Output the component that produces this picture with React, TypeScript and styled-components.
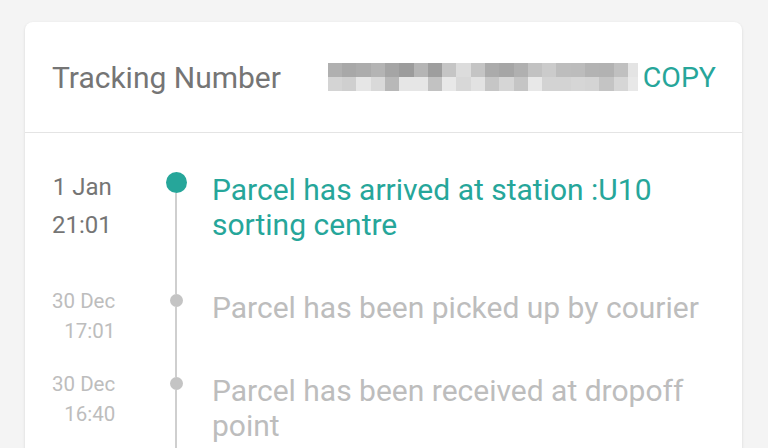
import React from 'react';
import styled, { createGlobalStyle } from 'styled-components';

const GlobalStyle = createGlobalStyle`
  html, body {
    margin: 0;
    padding: 0;
    background: #f4f4f4;
    font-family: Roboto, 'Liberation Sans', Arial, sans-serif;
  }
`;

const Page = styled.div`
  padding: 22px 26px 0 25px;
  height: 448px;
  box-sizing: border-box;
  overflow: hidden;
`;

const Card = styled.div`
  background: #fff;
  border-radius: 8px;
  box-shadow: 0 1px 3px rgba(0, 0, 0, 0.12);
  min-height: 600px;
`;

const Header = styled.div`
  display: flex;
  align-items: center;
  justify-content: space-between;
  height: 110px;
  padding: 0 26px 0 27px;
  border-bottom: 1px solid #e4e4e4;
`;

const Label = styled.span`
  font-size: 30px;
  color: #757575;
`;

const NumberGroup = styled.div`
  display: flex;
  align-items: center;
  gap: 5px;
`;

const Mosaic = styled.div`
  display: grid;
  grid-template-columns: repeat(21, 14.3px) 10px;
  grid-template-rows: 14px 14px;
  width: 310px;
`;

const Cell = styled.span<{ $shade: string }>`
  background: ${({ $shade }) => $shade};
`;

const CopyButton = styled.button`
  border: none;
  background: none;
  padding: 0;
  font-family: inherit;
  font-size: 28.5px;
  color: #26a69a;
  cursor: pointer;
`;

const Timeline = styled.div`
  padding: 39px 26px 0 27px;
`;

const Row = styled.div`
  display: flex;
  align-items: stretch;
`;

const DateCol = styled.div`
  width: 64px;
  flex-shrink: 0;
  margin-top: -4px;
`;

const DateText = styled.div<{ $active: boolean }>`
  display: inline-block;
  text-align: right;
  font-size: ${({ $active }) => ($active ? '24px' : '20.5px')};
  line-height: ${({ $active }) => ($active ? '38px' : '30px')};
  color: ${({ $active }) => ($active ? '#757575' : '#bdbdbd')};
  white-space: nowrap;
`;

const Rail = styled.div`
  width: 24px;
  flex-shrink: 0;
  margin: 0 24px 0 48px;
  display: flex;
  flex-direction: column;
  align-items: center;
`;

const Segment = styled.div<{ $grow?: boolean; $height?: number }>`
  width: 2px;
  background: #cfcfcf;
  flex: ${({ $grow }) => ($grow ? '1' : 'none')};
  height: ${({ $height }) => ($height ? `${$height}px` : 'auto')};
`;

const Dot = styled.div<{ $active: boolean }>`
  width: ${({ $active }) => ($active ? '21px' : '13px')};
  height: ${({ $active }) => ($active ? '21px' : '13px')};
  border-radius: 50%;
  background: ${({ $active }) => ($active ? '#26a69a' : '#c4c4c4')};
  flex-shrink: 0;
`;

const Body = styled.div<{ $active: boolean }>`
  flex: 1;
  font-size: 30px;
  line-height: 35px;
  padding-bottom: 48px;
  color: ${({ $active }) => ($active ? '#26a69a' : '#bdbdbd')};
`;

const shadesTop = [
  '#b0b0b0', '#a8a8a8', '#acacac', '#b4b4b4', '#a5a5a5', '#9c9c9c', '#b5b5b5', '#9e9e9e',
  '#c5c5c5', '#dcdcdc', '#c4c4c4', '#ababab', '#a6a6a6', '#b0b0b0', '#c2c2c2', '#cbcbcb',
  '#bdbdbd', '#bcbcbc', '#b3b3b3', '#b2b2b2', '#c0c0c0', '#e4e4e4',
];
const shadesBottom = [
  '#d4d4d4', '#cfcfcf', '#e6e6e6', '#d9d9d9', '#b8b8b8', '#e6e6e6', '#e6e6e6', '#c2c2c2',
  '#e8e8e8', '#d8d8d8', '#e2e2e2', '#c6c6c6', '#d6d6d6', '#c5c5c5', '#e8e8e8', '#d3d3d3',
  '#d3d3d3', '#d6d6d6', '#d4d4d4', '#c4c4c4', '#d6d6d6', '#e8e8e8',
];

const events = [
  { date: '1 Jan', time: '21:01', text: 'Parcel has arrived at station :U10 sorting centre' },
  { date: '30 Dec', time: '17:01', text: 'Parcel has been picked up by courier' },
  { date: '30 Dec', time: '16:40', text: 'Parcel has been received at dropoff point' },
];

export default function App() {
  return (
    <>
      <GlobalStyle />
      <Page>
        <Card>
          <Header>
            <Label>Tracking Number</Label>
            <NumberGroup>
              <Mosaic>
                {[...shadesTop, ...shadesBottom].map((shade, i) => (
                  <Cell key={i} $shade={shade} />
                ))}
              </Mosaic>
              <CopyButton>COPY</CopyButton>
            </NumberGroup>
          </Header>
          <Timeline>
            {events.map((ev, i) => {
              const active = i === 0;
              return (
                <Row key={i}>
                  <DateCol>
                    <DateText $active={active}>
                      {ev.date}
                      <br />
                      {ev.time}
                    </DateText>
                  </DateCol>
                  <Rail>
                    {!active && <Segment $height={4} />}
                    <Dot $active={active} />
                    <Segment $grow />
                  </Rail>
                  <Body $active={active}>{ev.text}</Body>
                </Row>
              );
            })}
          </Timeline>
        </Card>
      </Page>
    </>
  );
}
